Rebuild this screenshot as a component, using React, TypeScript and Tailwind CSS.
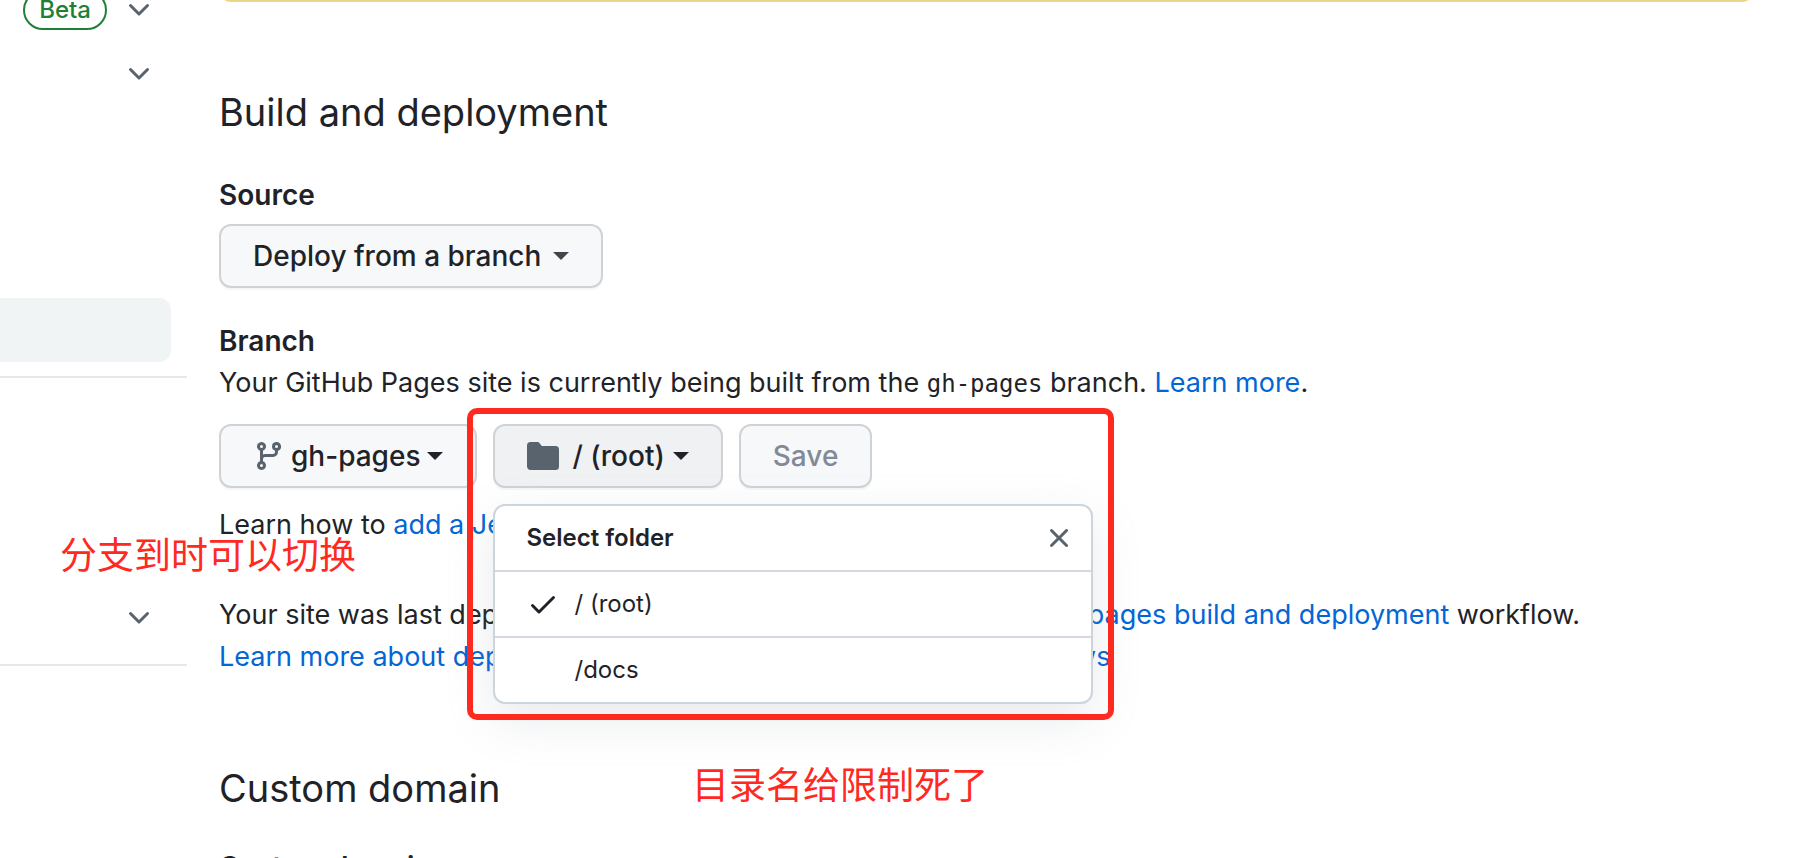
import { useState } from "react";
import type { ReactNode } from "react";
import clsx from "clsx";

const icons = {
    chevronDown:
        "M12.78 5.22a.749.749 0 0 1 0 1.06l-4.25 4.25a.749.749 0 0 1-1.06 0L3.22 6.28a.749.749 0 1 1 1.06-1.06L8 8.939l3.72-3.719a.749.749 0 0 1 1.06 0Z",
    branch: "M9.5 3.25a2.25 2.25 0 1 1 3 2.122V6A2.5 2.5 0 0 1 10 8.5H6a1 1 0 0 0-1 1v1.128a2.251 2.251 0 1 1-1.5 0V5.372a2.25 2.25 0 1 1 1.5 0v1.836A2.493 2.493 0 0 1 6 7h4a1 1 0 0 0 1-1v-.628A2.25 2.25 0 0 1 9.5 3.25Zm-6 0a.75.75 0 1 0 1.5 0 .75.75 0 0 0-1.5 0Zm8.25-.75a.75.75 0 1 0 0 1.5.75.75 0 0 0 0-1.5ZM4.25 12a.75.75 0 1 0 0 1.5.75.75 0 0 0 0-1.5Z",
    folder: "M1.75 1A1.75 1.75 0 0 0 0 2.75v10.5C0 14.216.784 15 1.75 15h12.5A1.75 1.75 0 0 0 16 13.25v-8.5A1.75 1.75 0 0 0 14.25 3H7.5a.25.25 0 0 1-.2-.1l-.9-1.2C6.07 1.26 5.55 1 5 1H1.75Z",
    close: "M3.72 3.72a.75.75 0 0 1 1.06 0L8 6.94l3.22-3.22a.749.749 0 0 1 1.275.326.749.749 0 0 1-.215.734L9.06 8l3.22 3.22a.749.749 0 0 1-.326 1.275.749.749 0 0 1-.734-.215L8 9.06l-3.22 3.22a.751.751 0 0 1-1.042-.018.751.751 0 0 1-.018-1.042L6.94 8 3.72 4.78a.75.75 0 0 1 0-1.06Z",
    check: "M13.78 4.22a.75.75 0 0 1 0 1.06l-7.25 7.25a.75.75 0 0 1-1.06 0L2.22 9.28a.751.751 0 0 1 .018-1.042.751.751 0 0 1 1.042-.018L6 10.94l6.72-6.72a.75.75 0 0 1 1.06 0Z",
};

function Icon({ name, className }: { name: keyof typeof icons; className?: string }) {
    return (
        <svg viewBox="0 0 16 16" fill="currentColor" aria-hidden="true" className={clsx("shrink-0", className)}>
            <path d={icons[name]} />
        </svg>
    );
}

function Caret({ className }: { className?: string }) {
    return (
        <svg viewBox="0 0 16 8" fill="currentColor" aria-hidden="true" className={clsx("h-2 w-4 shrink-0", className)}>
            <path d="M0 0h16L8 8Z" />
        </svg>
    );
}

type ButtonProps = {
    children: ReactNode;
    className?: string;
    disabled?: boolean;
    expanded?: boolean;
    onClick?: () => void;
};

function Button({ children, className, disabled, expanded, onClick }: ButtonProps) {
    return (
        <button
            type="button"
            disabled={disabled}
            aria-expanded={expanded}
            onClick={onClick}
            className={clsx(
                "flex h-16 items-center whitespace-nowrap rounded-xl border-2 border-[#d0d3d6] px-8 text-[28px] font-medium shadow-[0_2px_0_rgba(31,35,40,0.04)]",
                expanded ? "bg-[#f0f1f3]" : "bg-[#f6f8fa]",
                disabled && "text-[#818b98]",
                className,
            )}
        >
            {children}
        </button>
    );
}

function Link({ children }: { children: ReactNode }) {
    return (
        <a href="#" className="text-[#0366d6] hover:underline">
            {children}
        </a>
    );
}

type NavRowProps = { badge?: string; chevron?: boolean; selected?: boolean };

function NavRow({ badge, chevron, selected }: NavRowProps) {
    return (
        <li
            className={clsx(
                "mr-4 flex h-16 items-center justify-end gap-4 rounded-r-xl pr-4",
                selected && "bg-[#f0f4f5]",
            )}
        >
            {badge && (
                <span className="flex h-10 items-center rounded-full border-2 border-[#1f7f37] px-3.5 text-2xl font-medium text-[#1f7f37]">
                    {badge}
                </span>
            )}
            {chevron && <Icon name="chevronDown" className="size-8 text-[#59636e]" />}
        </li>
    );
}

function Sidebar() {
    return (
        <nav aria-label="Settings" className="-mt-[22px] w-[187px] shrink-0">
            <ul className="border-b-2 border-[#e4e8ec] pb-3.5">
                <NavRow badge="Beta" chevron />
                <NavRow chevron />
                <NavRow />
                <NavRow />
                <NavRow />
                <NavRow selected />
            </ul>
            <ul className="border-b-2 border-[#e4e8ec] pt-4 pb-3.5">
                <NavRow />
                <NavRow />
                <NavRow />
                <NavRow chevron />
            </ul>
        </nav>
    );
}

const folders = ["/ (root)", "/docs"];

function FolderSelect() {
    const [open, setOpen] = useState(true);
    const [folder, setFolder] = useState(folders[0]);

    return (
        <div className="relative">
            <Button expanded={open} onClick={() => setOpen(!open)}>
                <Icon name="folder" className="mr-3.5 size-8 text-[#59636e]" />
                {folder}
                <Caret className="ml-2" />
            </Button>

            {open && (
                <div className="absolute top-20 left-0 z-10 w-[600px] overflow-clip rounded-xl border-2 border-[#ccd4dc] bg-white text-2xl shadow-[0_16px_48px_rgba(140,149,159,0.2)]">
                    <div className="flex h-16 items-center justify-between pr-4 pl-8">
                        <span className="font-semibold">Select folder</span>
                        <button type="button" aria-label="Close" onClick={() => setOpen(false)}>
                            <Icon name="close" className="size-8 text-[#59636e]" />
                        </button>
                    </div>
                    {folders.map((item) => (
                        <button
                            key={item}
                            type="button"
                            onClick={() => setFolder(item)}
                            className="flex h-[66px] w-full items-center gap-4 border-t-2 border-[#d3d9df] pl-8"
                        >
                            <Icon name="check" className={clsx("size-8", item !== folder && "invisible")} />
                            {item}
                        </button>
                    ))}
                </div>
            )}

            {/* Highlight around the folder menu */}
            <div className="pointer-events-none absolute -top-4 -left-[26px] z-20 h-[312px] w-[647px] rounded-[10px] border-6 border-[#ff2a1f]" />
        </div>
    );
}

function Note({ children, className }: { children: ReactNode; className: string }) {
    return (
        <p
            lang="zh-CN"
            className={clsx(
                "absolute z-20 font-['Noto_Sans_CJK_SC',sans-serif] text-[37px] whitespace-nowrap text-[#ff2a1f]",
                className,
            )}
        >
            {children}
        </p>
    );
}

export default function App() {
    return (
        <div className="relative flex h-screen items-start gap-8 overflow-hidden bg-white pr-16 font-['Inter','Noto_Sans_CJK_SC',sans-serif] text-[27px] leading-[42px] text-[#1f2328]">
            <Sidebar />

            <main className="min-w-0 flex-1">
                <div className="-mt-10 h-[42px] rounded-xl border-2 border-[#eed487] bg-[#fff8c5]" />

                <section className="mt-20">
                    <h2 className="text-[38px] leading-[60px]">Build and deployment</h2>

                    <h3 className="mt-8 text-[28px] font-semibold">Source</h3>
                    <Button className="mt-2">
                        Deploy from a branch
                        <Caret className="ml-3 text-[#42464c]" />
                    </Button>

                    <h3 className="mt-8 text-[28px] font-semibold">Branch</h3>
                    <p>
                        Your GitHub Pages site is currently being built from the{" "}
                        <code className="font-['DejaVu_Sans_Mono',monospace] text-2xl leading-none">gh-pages</code>{" "}
                        branch. <Link>Learn more</Link>.
                    </p>
                    <div className="mt-5 flex gap-4">
                        <Button>
                            <Icon name="branch" className="mr-1.5 size-8 text-[#59636e]" />
                            gh-pages
                            <Caret className="ml-1.5" />
                        </Button>
                        <FolderSelect />
                        <Button disabled>Save</Button>
                    </div>
                    <p className="mt-4">
                        Learn how to <Link>add a Jekyll theme</Link> to your site.
                    </p>

                    <p className="mt-12">
                        Your site was last deployed to the <Link>github-pages</Link> environment by the{" "}
                        <Link>pages build and deployment</Link> workflow.
                        <br />
                        <Link>Learn more about deploying to GitHub Pages using custom workflows</Link>
                    </p>
                </section>

                <section className="mt-20">
                    <h2 className="text-[38px] leading-[60px]">Custom domain</h2>
                    <h3 className="mt-7 text-[28px] font-semibold">Custom domain</h3>
                </section>
            </main>

            <Note className="top-[532px] left-[60px]">分支到时可以切换</Note>
            <Note className="top-[762px] left-[692px]">目录名给限制死了</Note>
        </div>
    );
}
